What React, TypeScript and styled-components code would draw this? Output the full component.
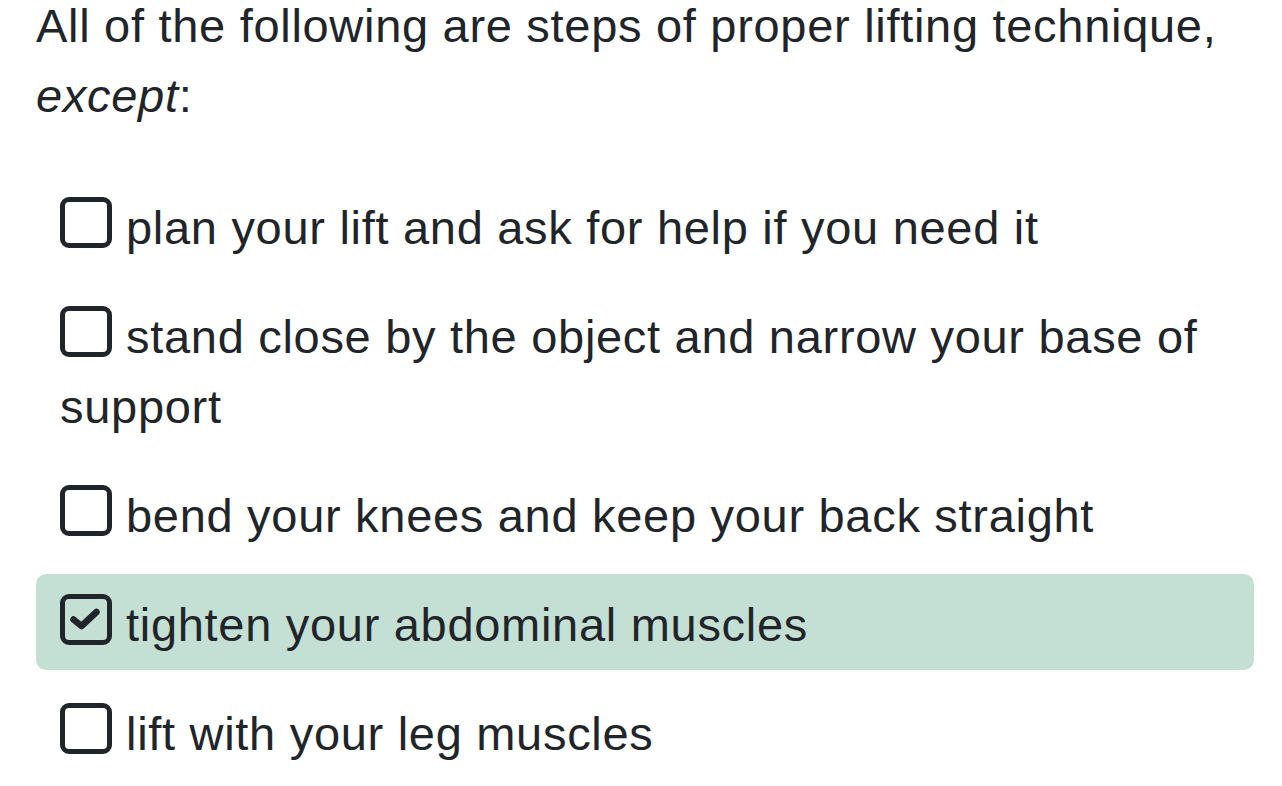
import React from 'react';
import styled, { createGlobalStyle } from 'styled-components';

const GlobalStyle = createGlobalStyle`
  html, body {
    margin: 0;
    padding: 0;
    background: #ffffff;
  }
  body {
    font-family: "Liberation Sans", Arial, Helvetica, sans-serif;
    color: #212529;
    overflow: hidden;
  }
`;

const Page = styled.div`
  padding: 0 28px 0 36px;
`;

const Question = styled.p`
  margin: -9px 0 46px 0;
  font-size: 47px;
  letter-spacing: 0.7px;
  line-height: 70px;
`;

const Options = styled.ul`
  list-style: none;
  margin: 0;
  padding: 0;
  display: flex;
  flex-direction: column;
  gap: 13px;
`;

const Option = styled.li<{ $selected?: boolean }>`
  padding: 16px 24px 10px 24px;
  font-size: 47px;
  letter-spacing: 0.7px;
  line-height: 70px;
  border-radius: 10px;
  background: ${(p) => (p.$selected ? '#c4e0d4' : 'transparent')};
`;

const Box = styled.span`
  display: inline-block;
  overflow: hidden;
  box-sizing: border-box;
  width: 52px;
  height: 51px;
  border: 5px solid #212529;
  border-radius: 9px;
  margin-right: 14px;
  vertical-align: -4px;

  svg {
    display: block;
  }
`;

const options = [
  'plan your lift and ask for help if you need it',
  'stand close by the object and narrow your base of support',
  'bend your knees and keep your back straight',
  'tighten your abdominal muscles',
  'lift with your leg muscles',
];

const selectedIndex = 3;

function Check() {
  return (
    <svg width="42" height="41" viewBox="0 0 42 41" fill="none">
      <path
        d="M8.5 20.5 L16.5 27 L31.5 13"
        stroke="#212529"
        strokeWidth="6.5"
        strokeLinecap="round"
        strokeLinejoin="round"
      />
    </svg>
  );
}

export default function App() {
  return (
    <Page>
      <GlobalStyle />
      <Question>
        All of the following are steps of proper lifting technique, <em>except</em>:
      </Question>
      <Options>
        {options.map((text, index) => (
          <Option key={index} $selected={index === selectedIndex}>
            <Box>{index === selectedIndex && <Check />}</Box>
            {text}
          </Option>
        ))}
      </Options>
    </Page>
  );
}
